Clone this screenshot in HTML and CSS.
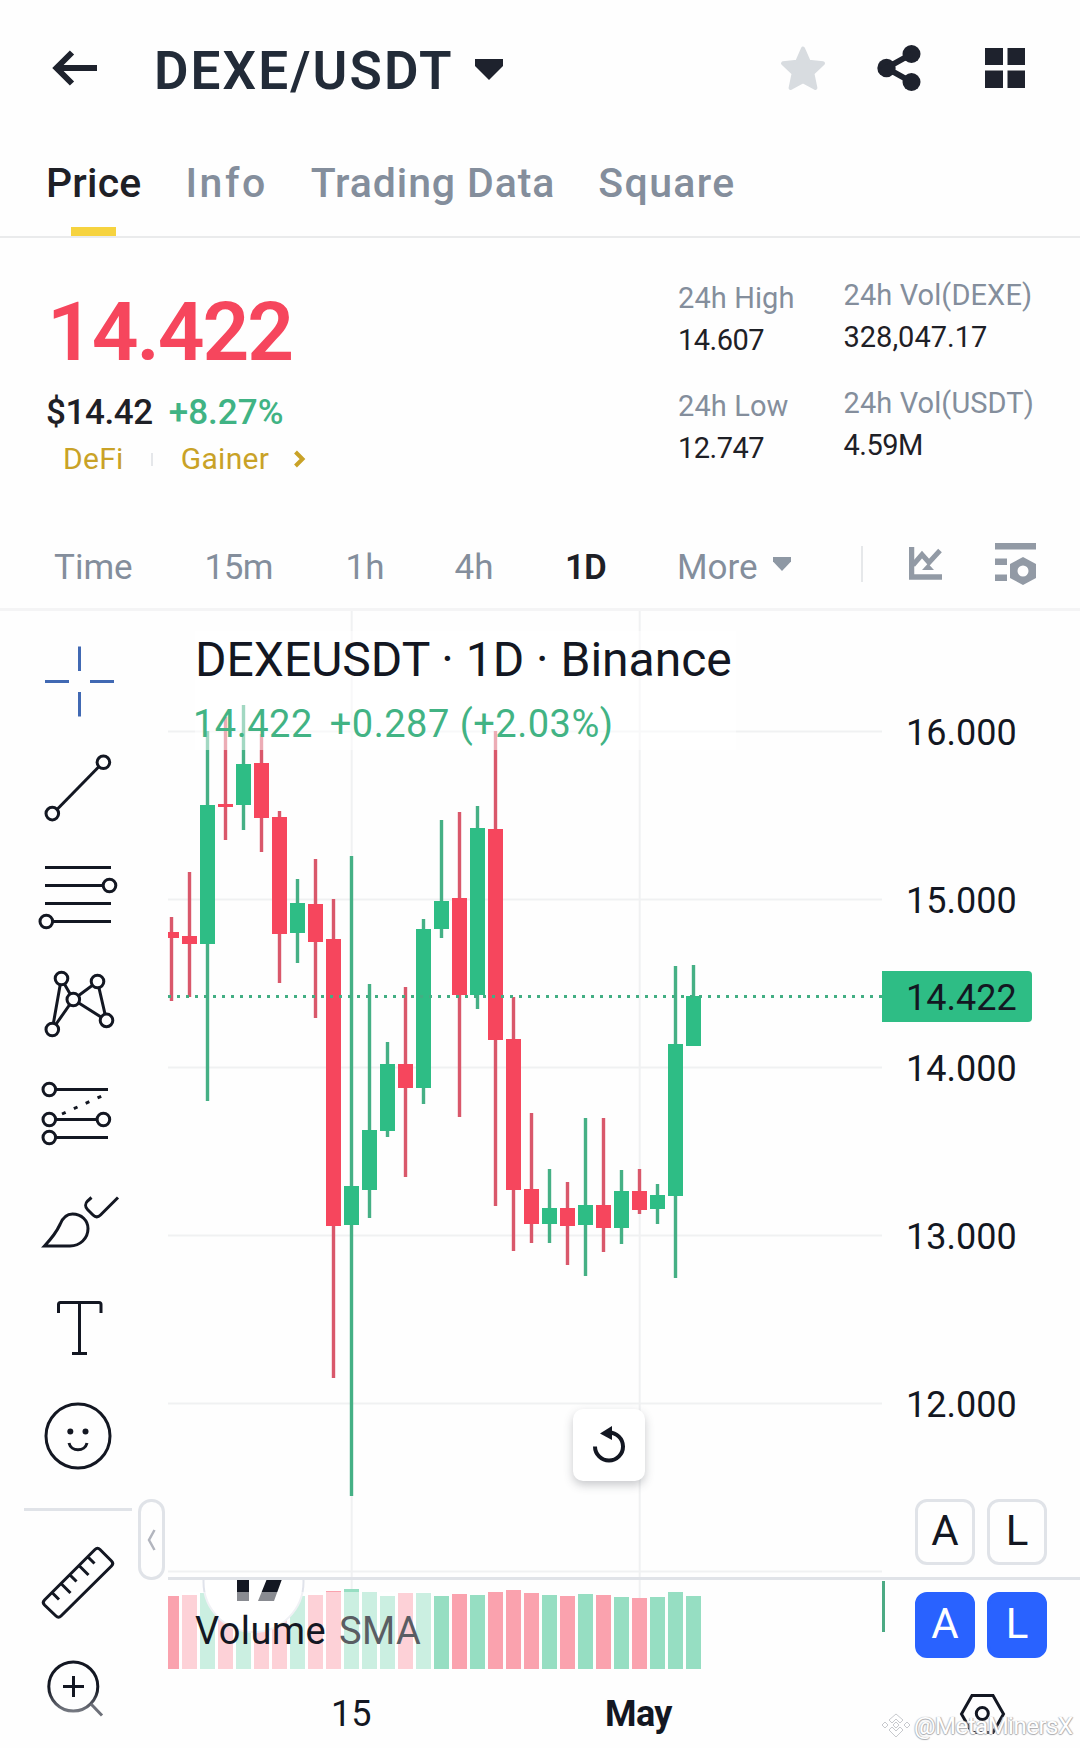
FILE: index.html
```
<!DOCTYPE html>
<html lang="en">
<head>
<meta charset="utf-8">
<title>DEXE/USDT</title>
<link rel="stylesheet" href="styles.css">
</head>
<body>
<main class="app">
  <header class="header">
    <svg class="back" width="46" height="38" viewBox="0 0 46 38"><path d="M45 19H5M20 3.500L4.500 19 20 34.500" fill="none" stroke="#1e222d" stroke-width="6"/></svg>
    <h1 class="pair">DEXE/USDT</h1>
    <svg class="pair-caret" width="28" height="21" viewBox="0 0 28 21"><path d="M0 0h28v7L14 21 0 7z" fill="#1e222d"/></svg>
    <div class="header-actions">
      <svg width="46" height="48" viewBox="0 0 46 48"><path d="M23 4.500l5.800 13.300 14.200 1.500-10.600 10 3 14.700L23 37.300 10.600 44l3-14.700L3 19.300l14.200-1.500z" fill="#d8dce0" stroke="#d8dce0" stroke-width="4" stroke-linejoin="round"/></svg>
      <svg width="44" height="48" viewBox="0 0 44 48"><g fill="#1e222d"><circle cx="9.500" cy="24" r="9.200"/><circle cx="34.500" cy="10" r="9"/><circle cx="34.500" cy="38" r="9"/></g><path d="M34.500 10L9.500 24l25 14" fill="none" stroke="#1e222d" stroke-width="6"/></svg>
      <svg width="40" height="40" viewBox="0 0 40 40"><path d="M0 0h18v17H0zM22.500 0H40v17H22.500zM0 22.500h18V40H0zM22.500 22.500H40V40H22.500z" fill="#1e222d"/></svg>
    </div>
  </header>

  <nav class="tabs">
    <a class="tab tab-active">Price</a>
    <a class="tab tab-info">Info</a>
    <a class="tab tab-data">Trading Data</a>
    <a class="tab tab-square">Square</a>
  </nav>

  <section class="summary">
    <div class="quote">
      <div class="last">14.422</div>
      <div class="sub"><span class="fiat">$14.42</span><span class="change">+8.27%</span></div>
      <div class="tags"><span>DeFi</span><i class="tag-sep"></i><span class="gainer">Gainer</span>
        <svg width="13" height="18" viewBox="0 0 13 18"><path d="M2.500 2l7 7-7 7" fill="none" stroke="#c9a227" stroke-width="4"/></svg></div>
    </div>
    <div class="stats">
      <dl><dt>24h High</dt><dd class="tight">14.607</dd></dl>
      <dl><dt>24h Low</dt><dd class="tight">12.747</dd></dl>
    </div>
    <div class="stats stats-vol">
      <dl><dt>24h Vol(DEXE)</dt><dd>328,047.17</dd></dl>
      <dl><dt>24h Vol(USDT)</dt><dd class="tight">4.59M</dd></dl>
    </div>
  </section>

  <nav class="intervals">
    <span>Time</span><span class="tight">15m</span><span>1h</span><span>4h</span><span class="interval-active">1D</span><span>More</span>
    <svg class="more-caret" width="18" height="14" viewBox="0 0 18 14"><path d="M0 0h18v4.500L9 14 0 4.500z" fill="#8e98a4"/></svg>
    <i class="interval-sep"></i>
    <svg width="34" height="34" viewBox="0 0 34 34"><g fill="none" stroke="#929aa5"><path d="M2.500 0v30H33" stroke-width="5.500"/><path d="M4 18l9-10.500 7 8L31 3.500" stroke-width="5"/></g><path d="M13 23l6-6.500 6 6.500z" fill="#929aa5"/></svg>
    <svg class="settings" width="41" height="42" viewBox="0 0 41 42"><path d="M0 0h41v6.500H0zM0 15.500h12V22H0zM0 31.500h12V38H0zM28 14l13 7v14l-13 7-13-7V21zM28 22.500a5.500 5.500 0 1 0 0 11 5.500 5.500 0 1 0 0-11z" fill="#929aa5" fill-rule="evenodd"/></svg>
  </nav>

  <section class="stage">
    <aside class="tools">
      <svg width="168" height="129" viewBox="0 611 168 129"><path class="cross" d="M79.500 646.500v24.500M79.500 692v24.500M45 681.500h24M90 681.500h24"/></svg>
      <svg width="168" height="100" viewBox="0 740 168 100"><path d="M57 809.500L98.800 766.800"/><circle cx="52.300" cy="813.600" r="6.300"/><circle cx="103.400" cy="762.300" r="6.300"/></svg>
      <svg width="168" height="110" viewBox="0 840 168 110"><path d="M45 867.500h66M45 885.500h58M45 903.500h66M53 921.500h58"/><circle cx="109.500" cy="885.500" r="6.300"/><circle cx="46.300" cy="921.500" r="6.300"/></svg>
      <svg width="168" height="110" viewBox="0 950 168 110"><g class="joints"><path d="M52.300 1029.500l9-51 12 21 24.200-18 9 39-33.200-21z"/><circle cx="61.500" cy="978.500" r="6.300"/><circle cx="97.500" cy="981.500" r="6.300"/><circle cx="73.300" cy="999.500" r="6.300"/><circle cx="106.500" cy="1020.400" r="6.300"/><circle cx="52.300" cy="1029.500" r="6.300"/></g></svg>
      <svg width="168" height="110" viewBox="0 1060 168 110"><path d="M55.500 1089.500H108M55.500 1119.500h42M55.500 1137.500H108"/><path d="M62 1114l42-19" stroke-dasharray="4 9"/><circle cx="49.300" cy="1089.500" r="6.300"/><circle cx="49.300" cy="1119.500" r="6.300"/><circle cx="103.400" cy="1119.500" r="6.300"/><circle cx="49.300" cy="1137.500" r="6.300"/></svg>
      <svg width="168" height="105" viewBox="0 1170 168 105"><path d="M44.500 1246c7-7.500 12.500-15 15.500-21.500 2.500-6.500 7-10.500 12.500-10.500 9 0 15.500 6.500 15.500 14.500 0 10-8 17.500-18 17.500zM91.500 1197.500l-4 3.500c-2.500 2.500-2.500 6 0 8.500l5.500 5.500c2.500 2.500 5 2.500 7.500 0l17.500-17.500"/></svg>
      <svg width="168" height="100" viewBox="0 1275 168 100"><path d="M58.500 1313v-8.500q0-2 2-2h38.500q2 0 2 2v8.500M79.500 1302.500v51M72 1353.500h15"/></svg>
      <svg width="168" height="125" viewBox="0 1375 168 125"><circle cx="78" cy="1436" r="32"/><path d="M69 1443c2 9 16 9 18 0"/><g class="dots"><circle cx="70.300" cy="1431.500" r="3"/><circle cx="85.500" cy="1431.500" r="3"/></g></svg>
      <hr class="tools-rule">
      <svg width="168" height="129" viewBox="0 1511 168 129"><path d="M95 1549.500q2.500-2.500 5 0l11.500 11.500q2.500 2.500 0 5L61 1616q-2.500 2.500-5 0L44.500 1605q-2.500-2.500 0-5zM88 1557l6.500 6.500M79.500 1566l9 9M70 1575l6.500 6.500M61.500 1584l9 9M52.500 1593l6.500 6.500"/></svg>
      <svg width="168" height="108" viewBox="0 1640 168 108"><defs><linearGradient id="fade" gradientUnits="userSpaceOnUse" x1="0" y1="1662" x2="0" y2="1716"><stop offset=".5" stop-color="#131722"/><stop offset="1" stop-color="#8a8d95"/></linearGradient></defs><circle cx="73.300" cy="1686.500" r="24.500" stroke="url(#fade)"/><path d="M63 1686.500h21M73.500 1676v21"/><path d="M91 1704l11 11.500" stroke="#6d7079"/></svg>
    </aside>

    <svg class="chart" width="912" height="1137" viewBox="168 611 912 1137">
      <defs><clipPath id="pane"><path d="M168 611h717v967H168z"/></clipPath><clipPath id="vol-pane"><path d="M168 1580h717v90H168z"/></clipPath></defs>
      <path class="grid" d="M351.700 611v1058M639.700 611v1058M168 731.500h714M168 899.500h714M168 1067.500h714M168 1235.500h714M168 1403.500h714M168 1571.500h714"/>
      <g id="candles" clip-path="url(#pane)"></g>
      <path class="last-line" d="M168 996.500h714"/>
      <g id="volume" clip-path="url(#vol-pane)"></g>
      <g clip-path="url(#vol-pane)"><circle cx="253.500" cy="1582" r="50" fill="#fff" stroke="#e0e3eb" stroke-width="2"/><path d="M237 1575h12v26h-12zM268.500 1575h15l-9.500 26h-16z" fill="#131722"/></g>
      <path class="pane-line" d="M168 1578.500h912"/>
      <path d="M883.500 1581v51" stroke="#4caa84" stroke-width="3"/>
      <path d="M882 971h146q4 0 4 4v43q0 4-4 4H882z" fill="#2ebd85"/>
      <g class="axis">
        <text x="906" y="744.500">16.000</text><text x="906" y="912.500">15.000</text><text x="906" y="1009.500">14.422</text><text x="906" y="1080.500">14.000</text><text x="906" y="1248.500">13.000</text><text x="906" y="1416.500">12.000</text>
        <text x="331" y="1726">15</text><text class="month" x="605" y="1726">May</text>
      </g>
      <g fill="none" stroke="#131722" stroke-width="3"><path d="M972 1695.500h21l10.500 18.500-10.500 18.500h-21L961.500 1714z"/><circle cx="982.300" cy="1713.500" r="6"/></g>
    </svg>

    <div class="legend">
      <div class="legend-title">DEXEUSDT · 1D · Binance</div>
      <div class="legend-values"><span>14.422</span><span>+0.287 (+2.03%)</span></div>
    </div>
    <div class="vol-legend"><span>Volume</span><span class="sma">SMA</span></div>
    <div class="handle"><svg width="9" height="22" viewBox="0 0 9 22"><path d="M7.500 1L2 11l5.500 10" fill="none" stroke="#b2b5be" stroke-width="2.500"/></svg></div>
    <div class="reset"><svg width="36" height="40" viewBox="0 0 36 40"><path d="M4 21.500a14 14 0 1 0 14-14" fill="none" stroke="#131722" stroke-width="4"/><path d="M9 8.500L21 1v14z" fill="#131722"/></svg></div>
    <div class="scale"><b>A</b><b>L</b></div>
    <div class="scale scale-on"><b>A</b><b>L</b></div>
    <div class="watermark"><svg width="30" height="26" viewBox="0 0 30 26"><path d="M8 7l7-6 7 6-3 3-4-4-4 4zM1 12l3-3 3 3-3 3zM23 12l3-3 3 3-3 3zM12 12l3-3 3 3-3 3zM8 17l3-3 4 4 4-4 3 3-7 7z" fill="#fff" stroke="#b9bbc0" stroke-width=".8"/></svg><span>@MetaMinersX</span></div>
  </section>
</main>
<script src="chart.js"></script>
</body>
</html>
```
FILE: styles.css
```
* { box-sizing: border-box; }
body { margin: 0; background: #fefefe; font-family: "Roboto", "Liberation Sans", sans-serif; color: #1e2026; }
svg { display: block; flex: none; }
.app { width: 1080px; height: 1748px; overflow: hidden; }

.header { display: flex; align-items: center; height: 136px; padding: 0 55px 0 52px; }
.pair { margin: 6px 0 0 56px; font-size: 53px; font-weight: 600; line-height: 60px; letter-spacing: 2.1px; color: #222b38; }
.pair-caret { margin: 2px 0 0 21px; }
.header-actions { display: flex; align-items: center; margin-left: auto; }
.header-actions svg + svg { margin-left: 51px; }
.header-actions svg:last-child { margin-left: 64px; }

.tabs { display: flex; gap: 43px; height: 102px; padding-left: 46px; border-bottom: 2px solid #eaebec; }
.tab { position: relative; font-size: 41px; font-weight: 480; line-height: 94px; color: #848e9c; }
.tab-active { font-weight: 500; color: #1e2026; letter-spacing: .2px; }
.tab-active::after { content: ""; position: absolute; left: 25px; bottom: 0; width: 45px; height: 9px; background: #f6d33f; }
.tab-info { margin-left: 1px; letter-spacing: 2.5px; }
.tab-data { letter-spacing: .9px; }
.tab-square { letter-spacing: 1.4px; }

.summary { display: grid; grid-template-columns: 632px 165.5px 1fr; height: 282px; padding-left: 46px; }
.quote { padding-top: 49px; }
.last { padding-left: 1px; font-size: 82px; font-weight: 600; line-height: 90px; letter-spacing: -2.1px; color: #f6465d; }
.sub { display: flex; gap: 16px; margin-top: 16px; font-size: 35px; font-weight: 500; line-height: 40px; }
.fiat { letter-spacing: -.4px; }
.change { color: #40b384; }
.tags { display: flex; align-items: center; margin: 6px 0 0 17px; font-size: 30px; line-height: 40px; letter-spacing: .3px; color: #c9a227; }
.tag-sep { width: 2px; height: 13px; margin: 0 28px 0 27px; background: #e5e7ea; }
.tags svg { margin: -1px 0 0 24px; }
.stats { display: flex; flex-direction: column; gap: 24px; padding-top: 39px; font-size: 29px; line-height: 42px; }
.stats-vol { padding-top: 36px; }
.stats dl, .stats dd { margin: 0; }
.stats dt { color: #848e9c; letter-spacing: .1px; }
.tight { letter-spacing: -.5px; }

.intervals { display: grid; grid-template-columns: 150.5px 141px 109px 110.5px 112px 96px 88px 48px 86px 41px; align-items: center; height: 91px; padding-left: 54px; border-bottom: 3px solid #f4f4f5; font-size: 35px; color: #848e9c; }
.intervals span { margin-top: 8px; line-height: 40px; }
.interval-active { font-weight: 600; letter-spacing: -1px; color: #1e2026; }
.more-caret { margin-top: -1px; }
.interval-sep { width: 2px; height: 36px; background: #e6e8ea; }

.stage { position: relative; display: grid; grid-template-columns: 168px 912px; height: 1137px; }
.tools { display: flex; flex-direction: column; }
.tools svg { fill: none; stroke: #131722; stroke-width: 3px; }
.tools .cross { stroke: #4169b3; }
.tools .joints circle { fill: #fefefe; }
.tools .dots { fill: #131722; stroke: none; }
.tools-rule { flex: none; width: 108px; height: 3px; margin: 8px 0 0 24px; border: 0; background: #e0e3e8; }

.grid { fill: none; stroke: #f0f1f2; stroke-width: 2px; }
.pane-line { stroke: #e0e3e8; stroke-width: 3px; }
.last-line { stroke: #42ae83; stroke-width: 3px; stroke-dasharray: 3 6; }
.wick-up { fill: #45b085; }
.wick-down { fill: #d9586b; }
.body-up { fill: #2ebd85; }
.body-down { fill: #f6465d; }
.vol-up { fill: #96dec2; }
.vol-down { fill: #faa2ae; }
.axis { font-size: 36px; fill: #131722; }
.month { font-weight: 700; letter-spacing: -.6px; }

.legend { position: absolute; left: 195px; top: 20px; height: 119px; padding-right: 4px; background: rgba(255, 255, 255, .5); white-space: nowrap; }
.legend-title { font-size: 48px; line-height: 58px; color: #131722; }
.legend-values { display: flex; gap: 17px; margin-left: -2px; padding-top: 8px; font-size: 38px; line-height: 55px; letter-spacing: .5px; color: #42b384; }
.vol-legend { position: absolute; left: 182px; top: 981px; display: flex; gap: 13px; width: 250px; height: 78px; padding: 16px 0 0 13px; background: rgba(255, 255, 255, .5); font-size: 38px; line-height: 46px; letter-spacing: .4px; color: #131722; }
.sma { color: #5a5d63; }

.handle { position: absolute; left: 138px; top: 888px; display: flex; align-items: center; justify-content: center; width: 27px; height: 81px; border: 3px solid #e0e3e8; border-radius: 13px; background: #fefefe; }
.reset { position: absolute; left: 573px; top: 798px; display: flex; align-items: center; justify-content: center; width: 72px; height: 72px; border-radius: 10px; background: #fff; box-shadow: 0 4px 10px rgba(60, 64, 75, .28); }
.scale { position: absolute; left: 915px; top: 888px; display: flex; gap: 12px; }
.scale b { width: 60px; height: 66px; border: 3px solid #e0e3e8; border-radius: 12px; background: #fefefe; font-size: 42px; font-weight: 400; line-height: 58px; text-align: center; color: #131722; }
.scale-on { top: 981px; }
.scale-on b { border-color: #2962ff; background: #2962ff; color: #fff; }
.watermark { position: absolute; left: 881px; top: 1099px; display: flex; align-items: center; gap: 3px; font-size: 24px; line-height: 32px; letter-spacing: -.5px; color: #fff; text-shadow: 1px 0 1px #a9abb0, 0 1px 1px #a9abb0, -1px 0 1px #c9cacd; }
```
FILE: chart.js
```
// Each candle: direction (1 up, 0 down), wick top, wick bottom, body top, body bottom, volume bar top
const candles = [
  [0, 917, 1001, 932, 938, 1596], [0, 872, 997, 936, 944, 1595], [1, 731, 1101, 805, 944, 1593],
  [0, 717, 840, 804, 807, 1595], [1, 705, 830, 764, 805, 1596], [0, 734, 852, 763, 818, 1594],
  [0, 811, 983, 817, 934, 1595], [1, 879, 963, 903, 933, 1596], [0, 859, 1018, 904, 942, 1595],
  [0, 899, 1378, 939, 1226, 1591], [1, 856, 1496, 1186, 1225, 1589], [1, 984, 1218, 1130, 1190, 1592],
  [1, 1042, 1137, 1064, 1131, 1596], [0, 987, 1177, 1064, 1088, 1593], [1, 919, 1104, 929, 1088, 1593],
  [1, 820, 938, 901, 929, 1596], [0, 812, 1117, 898, 995, 1594], [1, 806, 1009, 828, 995, 1595],
  [0, 731, 1206, 829, 1040, 1592], [0, 997, 1251, 1039, 1190, 1590], [0, 1113, 1243, 1189, 1224, 1593],
  [1, 1169, 1243, 1208, 1224, 1595], [0, 1182, 1265, 1208, 1226, 1596], [1, 1118, 1276, 1205, 1225, 1594],
  [0, 1118, 1252, 1205, 1228, 1595], [1, 1170, 1244, 1191, 1228, 1597], [0, 1169, 1214, 1191, 1210, 1598],
  [1, 1184, 1224, 1195, 1209, 1597], [1, 966, 1278, 1044, 1196, 1592], [1, 965, 1046, 996, 1046, 1596]
];
const NS = 'http://www.w3.org/2000/svg';
const bar = (parent, cls, x, y, w, bottom) => {
  const r = document.createElementNS(NS, 'rect');
  r.setAttribute('class', cls);
  r.setAttribute('x', x);
  r.setAttribute('y', y);
  r.setAttribute('width', w);
  r.setAttribute('height', bottom - y);
  parent.appendChild(r);
};
const price = document.getElementById('candles');
const volume = document.getElementById('volume');
candles.forEach(([up, wt, wb, bt, bb, vt], i) => {
  const x = 164 + 18 * i;
  const dir = up ? 'up' : 'down';
  bar(price, 'wick-' + dir, x + 5.8, wt, 3.4, wb);
  bar(price, 'body-' + dir, x, bt, 15, bb);
  bar(volume, 'vol-' + dir, x, vt, 15, 1669);
});
```
